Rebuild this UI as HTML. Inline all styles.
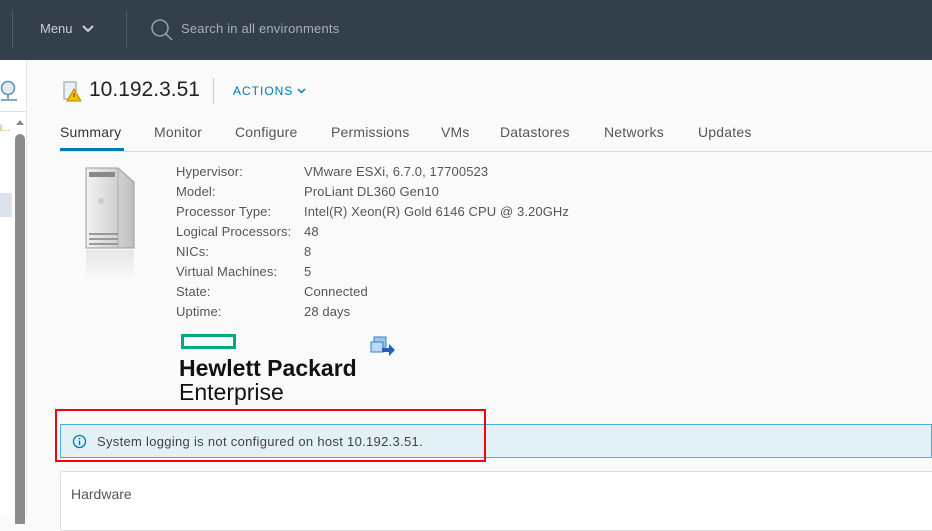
<!DOCTYPE html>
<html><head><style>
*{margin:0;padding:0;box-sizing:border-box}
body{width:932px;height:515px;overflow:hidden;background:#fafafa;font-family:"Liberation Sans",sans-serif;position:relative;color:#565656}
.hdr{position:absolute;left:0;top:0;width:932px;height:60px;background:#343f4c}
.sep{position:absolute;top:10px;width:1px;height:38px;background:#4f5a66}
.abs{position:absolute;white-space:nowrap}
.left{position:absolute;left:0;top:60px;width:27px;height:455px;background:#fff;border-right:1px solid #e6e6e6}
.tab{position:absolute;top:124px;font-size:14px;color:#565656;letter-spacing:0.2px}
.lab{position:absolute;left:176px;font-size:13px;color:#565656;letter-spacing:0.1px}
.val{position:absolute;left:304px;font-size:13px;color:#565656;letter-spacing:0.1px}
</style></head><body>
<div class="hdr">
<div class="sep" style="left:12px"></div>
<div class="sep" style="left:126px"></div>
<div class="abs" style="left:40px;top:21px;font-size:13px;color:#c9d0d6">Menu</div>
<svg class="abs" style="left:81px;top:24px" width="14" height="10"><path d="M2 2 L7 7 L12 2" stroke="#c9d0d6" stroke-width="2" fill="none"/></svg>
<svg class="abs" style="left:150px;top:18px" width="24" height="24"><circle cx="10" cy="10" r="8" stroke="#9aa4ad" stroke-width="1.5" fill="none"/><path d="M16 16 L22 22" stroke="#9aa4ad" stroke-width="1.5"/></svg>
<div class="abs" style="left:181px;top:21px;font-size:13px;color:#a8b1b9;letter-spacing:0.2px">Search in all environments</div>
</div>
<div class="left">
<svg class="abs" style="left:0;top:20px" width="18" height="22"><circle cx="8" cy="8" r="6.5" stroke="#5a8db0" stroke-width="1.5" fill="#dfeaf2"/><path d="M8 15v4M1 20h16" stroke="#5a8db0" stroke-width="1.5"/></svg>
<div class="abs" style="left:0;top:51px;width:27px;height:1px;background:#e0e0e0"></div>
<div class="abs" style="left:0;top:63px;font-size:9px;color:#c98a2a">l...</div>
<div class="abs" style="left:0;top:133px;width:12px;height:24px;background:#dde3ec"></div>
<div class="abs" style="left:16px;top:60px;width:0;height:0;border-left:4px solid transparent;border-right:4px solid transparent;border-bottom:5px solid #888"></div>
<div class="abs" style="left:15px;top:74px;width:10px;height:390px;background:#8c8c8c;border-radius:5px 5px 0 0"></div>
</div>
<svg class="abs" style="left:62px;top:80px" width="20" height="22"><rect x="2" y="2" width="12" height="17" fill="#eef1f4" stroke="#8a97a3"/><path d="M12 9 L19 21 L5 21 Z" fill="#f5c000" stroke="#b58a00"/><rect x="11.5" y="13" width="1" height="4" fill="#333"/></svg>
<div class="abs" style="left:89px;top:78px;font-size:21px;color:#222">10.192.3.51</div>
<div class="abs" style="left:213px;top:78px;width:1px;height:26px;background:#ccc"></div>
<div class="abs" style="left:233px;top:84px;font-size:12px;color:#0079b8;letter-spacing:1px">ACTIONS</div>
<svg class="abs" style="left:297px;top:88px" width="9" height="6"><path d="M1 1 L4.5 4.5 L8 1" stroke="#0079b8" stroke-width="1.5" fill="none"/></svg>
<div class="tab" style="left:60px;color:#333">Summary</div>
<div class="abs" style="left:60px;top:148px;width:64px;height:3px;background:#0079b8"></div>
<div class="abs" style="left:60px;top:151px;width:872px;height:1px;background:#ddd"></div>
<div class="tab" style="left:154px">Monitor</div>
<div class="tab" style="left:235px">Configure</div>
<div class="tab" style="left:331px">Permissions</div>
<div class="tab" style="left:441px">VMs</div>
<div class="tab" style="left:500px">Datastores</div>
<div class="tab" style="left:604px">Networks</div>
<div class="tab" style="left:698px">Updates</div>
<svg class="abs" style="left:85px;top:167px" width="50" height="115"><defs><linearGradient id="g" x1="0" x2="1"><stop offset="0" stop-color="#f2f2f2"/><stop offset="1" stop-color="#bfbfbf"/></linearGradient><linearGradient id="r" x1="0" y1="0" x2="0" y2="1"><stop offset="0" stop-color="#e6e6e6"/><stop offset="1" stop-color="#fafafa"/></linearGradient></defs><path d="M1 1 L33 1 L49 15 L49 81 L1 81 Z" fill="url(#g)" stroke="#999"/><path d="M33 1 L33 81" stroke="#aaa"/><rect x="4" y="5" width="26" height="5" fill="#888"/><circle cx="16" cy="34" r="3" fill="#ccc"/><rect x="4" y="66" width="29" height="2" fill="#999"/><rect x="4" y="71" width="29" height="2" fill="#999"/><rect x="4" y="76" width="29" height="2" fill="#999"/><rect x="1" y="83" width="48" height="30" fill="url(#r)"/></svg>
<div class="lab" style="top:164px">Hypervisor:</div><div class="val" style="top:164px">VMware ESXi, 6.7.0, 17700523</div>
<div class="lab" style="top:184px">Model:</div><div class="val" style="top:184px">ProLiant DL360 Gen10</div>
<div class="lab" style="top:204px">Processor Type:</div><div class="val" style="top:204px">Intel(R) Xeon(R) Gold 6146 CPU @ 3.20GHz</div>
<div class="lab" style="top:224px">Logical Processors:</div><div class="val" style="top:224px">48</div>
<div class="lab" style="top:244px">NICs:</div><div class="val" style="top:244px">8</div>
<div class="lab" style="top:264px">Virtual Machines:</div><div class="val" style="top:264px">5</div>
<div class="lab" style="top:284px">State:</div><div class="val" style="top:284px">Connected</div>
<div class="lab" style="top:304px">Uptime:</div><div class="val" style="top:304px">28 days</div>
<div class="abs" style="left:181px;top:334px;width:55px;height:15px;border:3px solid #01a982"></div>
<div class="abs" style="left:179px;top:355px;font-size:23px;font-weight:bold;color:#111">Hewlett Packard</div>
<div class="abs" style="left:179px;top:379px;font-size:23px;color:#111">Enterprise</div>
<svg class="abs" style="left:370px;top:336px" width="26" height="22"><rect x="4" y="1" width="12" height="10" fill="#9cc8ee" stroke="#3b7fc4"/><rect x="1" y="6" width="12" height="10" fill="#b9d9f5" stroke="#3b7fc4"/><path d="M12 12 h7 v-4 l6 6 -6 6 v-4 h-7z" fill="#1f63b5"/></svg>
<div class="abs" style="left:60px;top:424px;width:872px;height:34px;background:#e1f1f6;border:1px solid #49afd9"></div>
<svg class="abs" style="left:72px;top:434px" width="15" height="15"><circle cx="7.5" cy="7.5" r="6" stroke="#0079b8" stroke-width="1.3" fill="none"/><rect x="6.8" y="6.5" width="1.4" height="4.5" fill="#0079b8"/><circle cx="7.5" cy="4.6" r="0.9" fill="#0079b8"/></svg>
<div class="abs" style="left:97px;top:434px;font-size:13px;color:#444;letter-spacing:0.3px">System logging is not configured on host 10.192.3.51.</div>
<div class="abs" style="left:55px;top:409px;width:431px;height:53px;border:2px solid #ff0000"></div>
<div class="abs" style="left:60px;top:471px;width:880px;height:60px;background:#fff;border:1px solid #ddd;border-radius:3px"></div>
<div class="abs" style="left:71px;top:486px;font-size:14px;color:#565656">Hardware</div>
</body></html>
